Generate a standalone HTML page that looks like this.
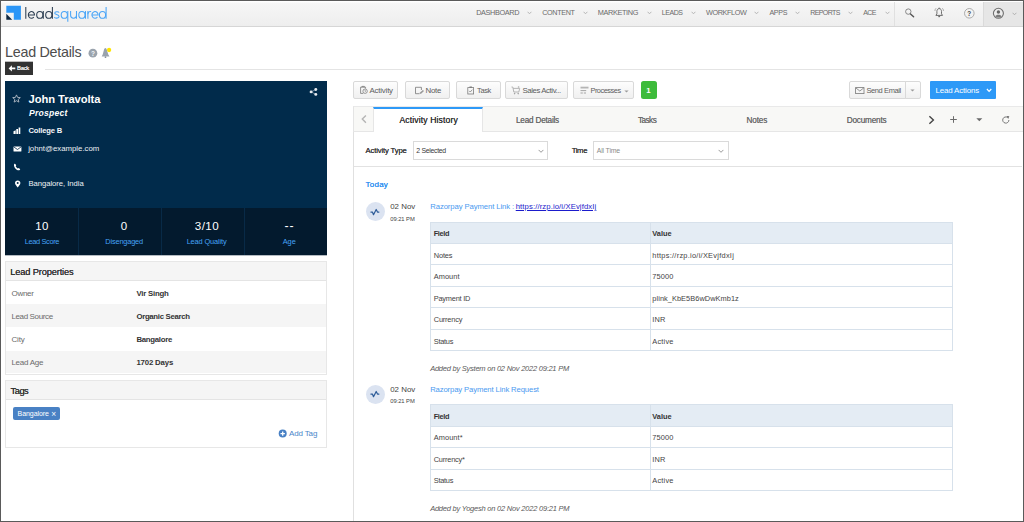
<!DOCTYPE html>
<html><head><meta charset="utf-8">
<style>
*{box-sizing:border-box;margin:0;padding:0}
html,body{width:1024px;height:522px;overflow:hidden;background:#fff}
body{font-family:"Liberation Sans",sans-serif;color:#333;position:relative}
.abs{position:absolute}
.t{position:absolute;white-space:pre;line-height:1}
#frame{position:absolute;left:0;top:0;width:1024px;height:522px;border:1px solid #5a5a5a;z-index:50;pointer-events:none}
#hdr{left:0;top:0;width:1024px;height:27px;background:linear-gradient(#fff 0,#fff 2px,#f6f6f6 3px,#eeeeee 26px);border-bottom:1px solid #d6d6d6}
.car{position:absolute}
.btn{position:absolute;top:81px;height:18.4px;border:1px solid #d9d9d9;border-radius:2px;background:linear-gradient(#fdfdfd,#f0f0f0)}
.row{position:absolute;left:6px;width:320px;height:23px}
.tbl{position:absolute;left:430px;width:523px;border:1px solid #d7e1eb;background:#fff}
.tbl .hd{position:absolute;left:0;right:0;top:0;height:20px;background:#e4ecf4}
.tbl .hl{position:absolute;left:0;right:0;height:1px;background:#d7e1eb}
.tbl .vd{position:absolute;left:218.5px;top:0;bottom:0;width:1px;background:#d7e1eb}
</style></head><body>
<div id="frame"></div>

<!-- header -->
<div id="hdr" class="abs"></div>
<svg class="abs" style="left:6px;top:5px" width="16" height="16" viewBox="0 0 16 16"><path d="M0.3 0.8 H14.9 V14.7 H7.8 V7.8 H0.3Z" fill="#2b96f7"/><path d="M0.3 8.8 L6.2 14.7 L0.3 14.7Z" fill="#0d2640"/></svg>
<svg class="abs" style="left:526.7px;top:11px" width="5" height="4" viewBox="0 0 5 4"><path d="M0.6 0.8 L2.5 2.8 L4.4 0.8" fill="none" stroke="#b0b0b0" stroke-width="0.9"/></svg><svg class="abs" style="left:582.7px;top:11px" width="5" height="4" viewBox="0 0 5 4"><path d="M0.6 0.8 L2.5 2.8 L4.4 0.8" fill="none" stroke="#b0b0b0" stroke-width="0.9"/></svg><svg class="abs" style="left:646.5px;top:11px" width="5" height="4" viewBox="0 0 5 4"><path d="M0.6 0.8 L2.5 2.8 L4.4 0.8" fill="none" stroke="#b0b0b0" stroke-width="0.9"/></svg><svg class="abs" style="left:690.7px;top:11px" width="5" height="4" viewBox="0 0 5 4"><path d="M0.6 0.8 L2.5 2.8 L4.4 0.8" fill="none" stroke="#b0b0b0" stroke-width="0.9"/></svg><svg class="abs" style="left:754.0px;top:11px" width="5" height="4" viewBox="0 0 5 4"><path d="M0.6 0.8 L2.5 2.8 L4.4 0.8" fill="none" stroke="#b0b0b0" stroke-width="0.9"/></svg><svg class="abs" style="left:794.5px;top:11px" width="5" height="4" viewBox="0 0 5 4"><path d="M0.6 0.8 L2.5 2.8 L4.4 0.8" fill="none" stroke="#b0b0b0" stroke-width="0.9"/></svg><svg class="abs" style="left:848.0px;top:11px" width="5" height="4" viewBox="0 0 5 4"><path d="M0.6 0.8 L2.5 2.8 L4.4 0.8" fill="none" stroke="#b0b0b0" stroke-width="0.9"/></svg><svg class="abs" style="left:884.5px;top:11px" width="5" height="4" viewBox="0 0 5 4"><path d="M0.6 0.8 L2.5 2.8 L4.4 0.8" fill="none" stroke="#b0b0b0" stroke-width="0.9"/></svg>
<!--LOGO--><svg class="abs" style="left:0;top:0" width="112" height="26" viewBox="0 0 112 26" fill="none" stroke-width="1.05"><g stroke="#2c3e52"><path d="M25.8 7.0 V18.75"/><path d="M28.299999999999997 15.0 H34.5 A3.1 3.35 0 1 0 33.84 16.96"/><ellipse cx="39.8" cy="14.9" rx="3.1" ry="3.35"/><path d="M43.3 11.05 V18.75"/><ellipse cx="48.8" cy="14.9" rx="3.1" ry="3.35"/><path d="M52.4 7.0 V18.75"/></g><g stroke="#4aa5f7"><path d="M59.099999999999994 12.55 C58.49999999999999 11.350000000000001 54.7 11.25 54.7 13.25 C54.7 14.700000000000001 59.099999999999994 14.5 59.099999999999994 16.45 C59.099999999999994 18.55 54.8 18.55 54.3 17.15"/><ellipse cx="64.3" cy="14.9" rx="3.1" ry="3.35"/><path d="M67.8 11.05 V21.8"/><path d="M70.6 11.05 V15.3 A2.95 2.95 0 0 0 76.5 15.3 V11.05"/><path d="M76.5 14.9 V18.75"/><ellipse cx="81.9" cy="14.9" rx="3.1" ry="3.35"/><path d="M85.5 11.05 V18.75"/><path d="M87.9 11.05 V18.75"/><path d="M87.9 14.3 C87.9 11.75 89.6 11.350000000000001 91.2 11.65"/><path d="M91.9 15.0 H98.1 A3.1 3.35 0 1 0 97.44 16.96"/><ellipse cx="102.5" cy="14.9" rx="3.1" ry="3.35"/><path d="M106.1 7.0 V18.75"/></g></svg><!--/LOGO-->
<div class="abs" style="left:894px;top:2px;width:1px;height:24px;background:#e0e0e0"></div>
<div class="abs" style="left:983px;top:2px;width:41px;height:24px;background:#e6e6e6;border-left:1px solid #dadada"></div>
<!-- search -->
<svg class="abs" style="left:904px;top:7px" width="12" height="12" viewBox="0 0 12 12"><circle cx="4.3" cy="4.6" r="2.7" fill="none" stroke="#7a7a7a" stroke-width="0.9"/><path d="M6.5 6.9 L9.6 9.8" stroke="#555" stroke-width="1.4" stroke-linecap="round"/></svg>
<!-- bell -->
<svg class="abs" style="left:933px;top:6px" width="13" height="14" viewBox="0 0 13 14"><path d="M6.2 2.6 C4.5 2.6 3.9 4 3.9 5.6 L3.9 7.8 L2.9 9.4 L9.5 9.4 L8.5 7.8 L8.5 5.6 C8.5 4 7.9 2.6 6.2 2.6Z" fill="none" stroke="#666" stroke-width="0.95"/><path d="M5.3 10.6 h1.8" stroke="#666" stroke-width="1.1"/><path d="M6.2 1.6 v1" stroke="#666" stroke-width="0.9"/><path d="M3.2 2.2 C2.2 3 1.9 4 2 5 M9.2 2.2 C10.2 3 10.5 4 10.4 5" fill="none" stroke="#888" stroke-width="0.7"/></svg>
<!-- help -->
<svg class="abs" style="left:963px;top:7px" width="13" height="13" viewBox="0 0 13 13"><circle cx="6.3" cy="6.3" r="4.8" fill="none" stroke="#a4a4a4" stroke-width="0.9"/><text x="6.3" y="8.6" font-size="6.4" font-weight="bold" text-anchor="middle" fill="#444" font-family="Liberation Sans">?</text></svg>
<!-- user -->
<svg class="abs" style="left:991.5px;top:7px" width="13" height="13" viewBox="0 0 13 13"><circle cx="6.4" cy="6.3" r="5" fill="#ececec" stroke="#6e6e6e" stroke-width="1.1"/><circle cx="6.4" cy="5" r="1.7" fill="#666"/><path d="M3.2 9.3 C3.8 7.2 9 7.2 9.6 9.3 C8 11 4.8 11 3.2 9.3Z" fill="#7a7a7a"/></svg>
<svg class="abs" style="left:1011.5px;top:11.5px" width="5" height="4" viewBox="0 0 5 4"><path d="M0.6 0.8 L2.5 2.8 L4.4 0.8" fill="none" stroke="#aaa" stroke-width="0.9"/></svg>

<!-- title -->
<svg class="abs" style="left:88px;top:48px" width="10" height="11" viewBox="0 0 10 11"><circle cx="4.9" cy="5.15" r="4.4" fill="#9aa3ad"/><text x="4.9" y="7.6" font-size="6.5" font-weight="bold" text-anchor="middle" fill="#f4f5f6" font-family="Liberation Sans">?</text></svg>
<svg class="abs" style="left:100px;top:46px" width="13" height="13" viewBox="0 0 13 13"><path d="M5.4 2 C4.8 2 4.3 2.7 4 3.8 L2.7 8.6 L1.7 10.6 H9.5 L8.3 8.6 L6.8 3.8 C6.5 2.7 6 2 5.4 2Z" fill="#9aa3ad"/><circle cx="5.5" cy="11.2" r="0.85" fill="#8a929b"/><circle cx="9.1" cy="4" r="2.15" fill="#ffe500"/></svg>
<div class="abs" style="left:5px;top:61px;width:28px;height:1px;background:#bdbdbd"></div><div class="abs" style="left:5px;top:62px;width:28px;height:12.8px;background:#333"></div>
<svg class="abs" style="left:8px;top:65px" width="8" height="7" viewBox="0 0 8 7"><path d="M0.6 3.4 L3.9 0.3 L3.9 2.5 L7.3 2.5 L7.3 4.3 L3.9 4.3 L3.9 6.5Z" fill="#fff"/></svg>
<div class="abs" style="left:45px;top:69px;width:977px;height:1px;background:#e4e4e4"></div>

<!-- lead card -->
<div class="abs" style="left:5px;top:81px;width:321.5px;height:127px;background:#012b4b"></div>
<div class="abs" style="left:5px;top:208px;width:321.5px;height:47px;background:#031a2e"></div>
<div class="abs" style="left:5px;top:255px;width:321.5px;height:1px;background:#b4bbc2"></div>
<div class="abs" style="left:78.3px;top:208px;width:1px;height:47px;background:#082a47"></div>
<div class="abs" style="left:161px;top:208px;width:1px;height:47px;background:#082a47"></div>
<div class="abs" style="left:243.7px;top:208px;width:1px;height:47px;background:#082a47"></div>
<svg class="abs" style="left:12.3px;top:93.8px" width="9" height="9" viewBox="0 0 9 9"><path d="M4.5 0.9 L5.6 3.4 L8.3 3.6 L6.2 5.4 L6.9 8.1 L4.5 6.7 L2.1 8.1 L2.8 5.4 L0.7 3.6 L3.4 3.4Z" fill="none" stroke="#b3bcc6" stroke-width="0.9"/></svg>
<svg class="abs" style="left:309px;top:87px" width="10" height="10" viewBox="0 0 10 10"><path d="M2.1 4.9 L6.8 2.5 M2.1 4.9 L6.8 7.4" stroke="#9fb0c0" stroke-width="0.7"/><circle cx="2.1" cy="4.9" r="1.45" fill="#e8ebef"/><circle cx="6.8" cy="2.5" r="1.45" fill="#e8ebef"/><circle cx="6.8" cy="7.4" r="1.45" fill="#e8ebef"/></svg>
<svg class="abs" style="left:13px;top:127px" width="8" height="8" viewBox="0 0 8 8"><path d="M0.5 7 L0.5 4.3 L2.7 3.3 L2.7 7Z M3.3 7 L3.3 2 L5 2 L5 7Z M5.6 7 L5.6 0.4 L7.3 0.4 L7.3 7Z" fill="#fff"/></svg>
<svg class="abs" style="left:13px;top:145.5px" width="9" height="7" viewBox="0 0 9 7"><rect x="0.5" y="0.4" width="7.9" height="5.2" rx="0.6" fill="#fff"/><path d="M0.8 0.9 L4.45 3.5 L8.1 0.9" stroke="#00294a" stroke-width="0.8" fill="none"/></svg>
<svg class="abs" style="left:13px;top:162.5px" width="9" height="9" viewBox="0 0 9 9"><path d="M1.4 1.2 C2 0.6 2.6 0.8 3 1.6 L3.5 2.6 C3.7 3 3.4 3.4 3 3.7 C3.6 4.9 4.3 5.6 5.4 6.2 C5.8 5.7 6.2 5.5 6.6 5.8 L7.5 6.4 C8.2 6.9 8 7.5 7.4 7.9 C6.2 8.6 4 7.6 2.6 6 C1.2 4.4 0.6 2.2 1.4 1.2Z" fill="#fff" transform="scale(0.9)"/></svg>
<svg class="abs" style="left:14px;top:180px" width="8" height="9" viewBox="0 0 8 9"><path d="M3.7 0.4 C2.1 0.4 1 1.6 1 3 C1 4.6 2.8 6 3.7 7.6 C4.6 6 6.4 4.6 6.4 3 C6.4 1.6 5.3 0.4 3.7 0.4Z" fill="#fff"/><circle cx="3.7" cy="3" r="1" fill="#00294a"/></svg>

<!-- lead properties -->
<div class="abs" style="left:5px;top:261px;width:322px;height:113.5px;border:1px solid #e7e7e7;background:#fff"></div>
<div class="abs" style="left:6px;top:262px;width:320px;height:19px;background:#f5f5f5;border-bottom:1px solid #e4e4e4"></div>
<div class="row" style="top:304px;background:#f5f5f5"></div>
<div class="row" style="top:350.7px;height:22.8px;background:#f5f5f5"></div>

<!-- tags -->
<div class="abs" style="left:5px;top:380.3px;width:322px;height:68px;border:1px solid #e7e7e7;background:#fff"></div>
<div class="abs" style="left:6px;top:381.3px;width:320px;height:18.5px;background:#f5f5f5;border-bottom:1px solid #e4e4e4"></div>
<div class="abs" style="left:13px;top:407px;width:47px;height:13.4px;background:#4981c4;border-radius:2px"></div>
<svg class="abs" style="left:278px;top:428.5px" width="9" height="9" viewBox="0 0 9 9"><circle cx="4.7" cy="4.6" r="4" fill="#4880c4"/><path d="M4.7 2.4 V6.8 M2.5 4.6 H6.9" stroke="#fff" stroke-width="1.3"/></svg>

<!-- right pane -->
<div class="abs" style="left:353px;top:107px;width:1px;height:415px;background:#e0e0e0"></div>
<div class="btn" style="left:353px;width:45.3px"></div>
<div class="btn" style="left:405px;width:45px"></div>
<div class="btn" style="left:455.6px;width:45px"></div>
<div class="btn" style="left:505px;width:62.8px"></div>
<div class="btn" style="left:573px;width:60.8px"></div>
<svg class="abs" style="left:623.5px;top:89.5px" width="5" height="3" viewBox="0 0 5 3"><path d="M0.4 0.4 H4.6 L2.5 2.5Z" fill="#9a9a9a"/></svg>
<div class="abs" style="left:640.8px;top:81px;width:16px;height:18.4px;background:#3dbb3b;border-radius:2.5px"></div>
<!-- btn icons -->
<svg class="abs" style="left:359px;top:85px" width="11" height="11" viewBox="0 0 11 11"><path d="M3.6 2.2 H1.6 V8.4 H4.2 M6.6 3.6 V2.2 H3.6 M2.9 2.2 V1.4 H5.4 V2.2" fill="none" stroke="#777" stroke-width="0.8"/><circle cx="6.1" cy="6.2" r="2.2" fill="none" stroke="#777" stroke-width="0.75"/><path d="M6.1 5 V6.3 H7" fill="none" stroke="#777" stroke-width="0.6"/></svg>
<svg class="abs" style="left:414px;top:85px" width="12" height="11" viewBox="0 0 12 11"><path d="M5.6 8.7 H1.5 V2.3 H7.4 V5" fill="none" stroke="#777" stroke-width="0.8"/><path d="M5.8 8.9 L6.3 7.3 L8.9 4.9 L10 6 L7.4 8.4Z" fill="#999" stroke="none"/></svg>
<svg class="abs" style="left:466.5px;top:86px" width="8" height="9" viewBox="0 0 8 9"><rect x="0.8" y="1.6" width="5.8" height="6.4" fill="none" stroke="#7c7c7c" stroke-width="0.8"/><path d="M2.5 1.2 h2.4" stroke="#7c7c7c" stroke-width="1.4"/><path d="M2.2 4.9 L3.3 6 L5.3 3.7" fill="none" stroke="#7c7c7c" stroke-width="0.8"/></svg>
<svg class="abs" style="left:511px;top:86px" width="10" height="9" viewBox="0 0 10 9"><path d="M0.5 1 H1.8 L2.8 6 H7.8 L8.7 2.4 H2.2" fill="none" stroke="#a4a4a4" stroke-width="0.8"/><circle cx="3.6" cy="7.6" r="0.8" fill="#a4a4a4"/><circle cx="7.2" cy="7.6" r="0.8" fill="#a4a4a4"/><path d="M7.6 0.2 V1.8 M6.8 1 H8.4" stroke="#a4a4a4" stroke-width="0.6"/></svg>
<svg class="abs" style="left:579.5px;top:86px" width="9" height="9" viewBox="0 0 9 9"><path d="M0.5 1.6 H8.5" stroke="#b5b5b5" stroke-width="1.8"/><path d="M0.5 4.6 H6.2 M0.5 7 H2.8 M3.8 7 H6" stroke="#9a9a9a" stroke-width="0.9"/></svg>

<!-- send email / lead actions -->
<div class="btn" style="left:849px;width:57px;border-radius:2px 0 0 2px"></div>
<div class="btn" style="left:905px;width:15.5px;border-radius:0 2px 2px 0"></div>
<svg class="abs" style="left:910.3px;top:88.5px" width="5" height="3" viewBox="0 0 5 3"><path d="M0.4 0.4 H4.6 L2.5 2.5Z" fill="#9a9a9a"/></svg>
<svg class="abs" style="left:854.5px;top:86.5px" width="10" height="8" viewBox="0 0 10 8"><rect x="0.6" y="0.6" width="8.4" height="6" fill="none" stroke="#7a7a7a" stroke-width="0.8"/><path d="M0.8 0.9 L4.8 4 L8.8 0.9" fill="none" stroke="#7a7a7a" stroke-width="0.8"/></svg>
<div class="abs" style="left:930px;top:81px;width:65.6px;height:18.4px;background:#2d99f7;border-radius:1px"></div>
<svg class="abs" style="left:986px;top:88px" width="6" height="5" viewBox="0 0 6 5"><path d="M0.9 1 L3.1 3.3 L5.3 1" fill="none" stroke="#fff" stroke-width="1.2"/></svg>

<!-- tabs -->
<div class="abs" style="left:353px;top:106px;width:671px;height:26px;background:#f8f8f6;border-top:1px solid #e9e9e9;border-bottom:1px solid #e6e6e6;border-left:1px solid #e4e4e4"></div>
<div class="abs" style="left:373px;top:107px;width:110.3px;height:25px;background:#fff;border-top:2px solid #2d99f7;border-left:1px solid #e6e6e6;border-right:1px solid #e6e6e6"></div>
<svg class="abs" style="left:360px;top:114.2px" width="8" height="10" viewBox="0 0 8 10"><path d="M5.9 1.5 L2.3 5.1 L5.9 8.7" fill="none" stroke="#b4b4b4" stroke-width="1.4"/></svg>
<svg class="abs" style="left:927px;top:114.5px" width="9" height="10" viewBox="0 0 9 10"><path d="M2.4 1.2 L6.4 5 L2.4 8.8" fill="none" stroke="#444" stroke-width="1.4"/></svg>
<svg class="abs" style="left:948.5px;top:115px" width="9" height="9" viewBox="0 0 9 9"><path d="M4.5 1.2 V7.8 M1.2 4.5 H7.8" stroke="#6a6a6a" stroke-width="1"/></svg>
<svg class="abs" style="left:976px;top:117.8px" width="7" height="4" viewBox="0 0 7 4"><path d="M0.3 0.3 H6.3 L3.3 3.3Z" fill="#6a6a6a"/></svg>
<svg class="abs" style="left:1001px;top:114.5px" width="10" height="10" viewBox="0 0 10 10"><path d="M7.9 5 A3.1 3.1 0 1 1 6.6 2.5" fill="none" stroke="#6a6a6a" stroke-width="0.9"/><path d="M5.6 1 L8.3 1.3 L7.2 3.9Z" fill="#6a6a6a"/></svg>

<!-- filters -->
<div class="abs" style="left:413px;top:141px;width:135px;height:18.6px;border:1px solid #dadada;background:#fff"></div>
<svg class="abs" style="left:537.8px;top:148.5px" width="6" height="5" viewBox="0 0 6 5"><path d="M0.6 0.9 L3 3.3 L5.4 0.9" fill="none" stroke="#999" stroke-width="1"/></svg>
<div class="abs" style="left:593.3px;top:141px;width:135.4px;height:18.6px;border:1px solid #dadada;background:#fff"></div>
<svg class="abs" style="left:718.3px;top:148.5px" width="6" height="5" viewBox="0 0 6 5"><path d="M0.6 0.9 L3 3.3 L5.4 0.9" fill="none" stroke="#999" stroke-width="1"/></svg>
<div class="abs" style="left:354px;top:166px;width:668px;height:1px;background:#e2e2e2"></div>

<!-- activity 1 -->
<div class="abs" style="left:365.6px;top:202px;width:19.2px;height:19.2px;border-radius:50%;background:#dbe3f1"></div>
<svg class="abs" style="left:370px;top:207.6px" width="11" height="9" viewBox="0 0 11 9"><path d="M0.9 4.1 H2.4 L3.5 6.7 L6.2 1.5 L7.5 4.1 H8.9" fill="none" stroke="#2c5b98" stroke-width="1.2" stroke-linejoin="round" stroke-linecap="round"/></svg>
<div class="tbl" style="top:222px;height:129px"><div class="hd"></div><div class="vd"></div>
<div class="hl" style="top:20px"></div><div class="hl" style="top:41px"></div><div class="hl" style="top:63px"></div><div class="hl" style="top:84px"></div><div class="hl" style="top:106px"></div>
</div>

<!-- activity 2 -->
<div class="abs" style="left:365.6px;top:384.6px;width:19.2px;height:19.2px;border-radius:50%;background:#dbe3f1"></div>
<svg class="abs" style="left:370px;top:390.3px" width="11" height="9" viewBox="0 0 11 9"><path d="M0.9 4.1 H2.4 L3.5 6.7 L6.2 1.5 L7.5 4.1 H8.9" fill="none" stroke="#2c5b98" stroke-width="1.2" stroke-linejoin="round" stroke-linecap="round"/></svg>
<div class="tbl" style="top:404px;height:87px"><div class="hd" style="height:21px"></div><div class="vd"></div>
<div class="hl" style="top:21px"></div><div class="hl" style="top:42px"></div><div class="hl" style="top:64px"></div>
</div>

<div class="t" style="left:476.24px;top:9px;font-size:7.3px;color:#6a6a6a;letter-spacing:-0.381px;">DASHBOARD</div>
<div class="t" style="left:542.25px;top:9px;font-size:7.2px;color:#6a6a6a;letter-spacing:-0.353px;">CONTENT</div>
<div class="t" style="left:597.74px;top:9px;font-size:7.35px;color:#6a6a6a;letter-spacing:-0.375px;">MARKETING</div>
<div class="t" style="left:661.75px;top:9px;font-size:7.0px;color:#6a6a6a;letter-spacing:-0.440px;">LEADS</div>
<div class="t" style="left:705.95px;top:9px;font-size:7.25px;color:#6a6a6a;letter-spacing:-0.372px;">WORKFLOW</div>
<div class="t" style="left:769.45px;top:10px;font-size:7.15px;color:#6a6a6a;letter-spacing:-0.366px;">APPS</div>
<div class="t" style="left:810.15px;top:9px;font-size:7.0px;color:#6a6a6a;letter-spacing:-0.558px;">REPORTS</div>
<div class="t" style="left:863.15px;top:9px;font-size:7.0px;color:#6a6a6a;letter-spacing:-0.521px;">ACE</div>
<div class="t" style="left:5.10px;top:45px;font-size:14.3px;color:#4d4d4d;letter-spacing:-0.268px;">Lead Details</div>
<div class="t" style="left:17.09px;top:66px;font-size:5.9px;color:#f3f3f3;letter-spacing:-0.287px;text-shadow:0 0 0.4px #fff">Back</div>
<div class="t" style="left:28.61px;top:94px;font-size:11.2px;color:#fff;letter-spacing:-0.077px;font-weight:bold">John Travolta</div>
<div class="t" style="left:29.10px;top:109px;font-size:8.6px;color:#fff;letter-spacing:0.216px;font-weight:bold;font-style:italic">Prospect</div>
<div class="t" style="left:28.53px;top:127px;font-size:7.6px;color:#f4f6f8;letter-spacing:-0.165px;font-weight:bold">College B</div>
<div class="t" style="left:28.13px;top:145px;font-size:7.8px;color:#eef1f4;letter-spacing:-0.003px;">johnt@example.com</div>
<div class="t" style="left:28.53px;top:180px;font-size:7.7px;color:#eef1f4;letter-spacing:-0.056px;">Bangalore, India</div>
<div class="t" style="left:35.30px;top:221px;font-size:11.45px;color:#fff;letter-spacing:0.383px;">10</div>
<div class="t" style="left:120.80px;top:221px;font-size:11.5px;color:#fff;letter-spacing:0.406px;">0</div>
<div class="t" style="left:194.79px;top:220px;font-size:11.65px;color:#fff;letter-spacing:0.416px;">3/10</div>
<div class="t" style="left:284.47px;top:220px;font-size:12.3px;color:#fff;letter-spacing:1.045px;">--</div>
<div class="t" style="left:24.64px;top:238px;font-size:7.4px;color:#45a3f7;letter-spacing:-0.336px;">Lead Score</div>
<div class="t" style="left:105.34px;top:238px;font-size:7.4px;color:#45a3f7;letter-spacing:-0.183px;">Disengaged</div>
<div class="t" style="left:186.64px;top:238px;font-size:7.4px;color:#45a3f7;letter-spacing:-0.129px;">Lead Quality</div>
<div class="t" style="left:282.64px;top:238px;font-size:7.4px;color:#45a3f7;letter-spacing:-0.015px;">Age</div>
<div class="t" style="left:10.37px;top:268px;font-size:9.3px;color:#333;letter-spacing:-0.172px;text-shadow:0 0 0.35px #333">Lead Properties</div>
<div class="t" style="left:11.42px;top:290px;font-size:8.0px;color:#6b6b6b;letter-spacing:-0.245px;">Owner</div>
<div class="t" style="left:11.42px;top:313px;font-size:8.0px;color:#6b6b6b;letter-spacing:-0.363px;">Lead Source</div>
<div class="t" style="left:11.42px;top:336px;font-size:8.0px;color:#6b6b6b;letter-spacing:-0.149px;">City</div>
<div class="t" style="left:11.42px;top:359px;font-size:8.0px;color:#6b6b6b;letter-spacing:-0.260px;">Lead Age</div>
<div class="t" style="left:136.43px;top:290px;font-size:7.8px;color:#333;letter-spacing:-0.217px;font-weight:bold">Vir Singh</div>
<div class="t" style="left:136.43px;top:313px;font-size:7.8px;color:#333;letter-spacing:-0.318px;font-weight:bold">Organic Search</div>
<div class="t" style="left:136.43px;top:336px;font-size:7.8px;color:#333;letter-spacing:-0.282px;font-weight:bold">Bangalore</div>
<div class="t" style="left:136.43px;top:359px;font-size:7.8px;color:#333;letter-spacing:-0.166px;font-weight:bold">1702 Days</div>
<div class="t" style="left:10.47px;top:387px;font-size:9.3px;color:#333;letter-spacing:-0.454px;text-shadow:0 0 0.35px #333">Tags</div>
<div class="t" style="left:17.55px;top:410px;font-size:7px;color:#fff;letter-spacing:-0.063px;">Bangalore</div>
<div class="t" style="left:51.31px;top:410px;font-size:8.4px;color:#fff;letter-spacing:0.283px;">×</div>
<div class="t" style="left:289.12px;top:430px;font-size:8px;color:#4a86c9;letter-spacing:-0.163px;">Add Tag</div>
<div class="t" style="left:369.52px;top:87px;font-size:7.9px;color:#5c5c5c;letter-spacing:-0.206px;">Activity</div>
<div class="t" style="left:425.52px;top:87px;font-size:7.9px;color:#5c5c5c;letter-spacing:-0.263px;">Note</div>
<div class="t" style="left:477.04px;top:87px;font-size:7.45px;color:#5c5c5c;letter-spacing:-0.368px;">Task</div>
<div class="t" style="left:522.43px;top:87px;font-size:7.8px;color:#5c5c5c;letter-spacing:-0.399px;">Sales Activ...</div>
<div class="t" style="left:590.44px;top:87px;font-size:7.35px;color:#5c5c5c;letter-spacing:-0.455px;">Processes</div>
<div class="t" style="left:866.54px;top:87px;font-size:7.45px;color:#5c5c5c;letter-spacing:-0.383px;">Send Email</div>
<div class="t" style="left:646.33px;top:87px;font-size:7.8px;color:#fff;letter-spacing:0.202px;font-weight:bold">1</div>
<div class="t" style="left:935.42px;top:87px;font-size:7.9px;color:#fff;letter-spacing:-0.133px;">Lead Actions</div>
<div class="t" style="left:399.40px;top:116px;font-size:8.6px;color:#333;letter-spacing:0.133px;text-shadow:0 0 0.35px #333">Activity History</div>
<div class="t" style="left:516.01px;top:117px;font-size:8.2px;color:#6a6a6a;letter-spacing:-0.212px;text-shadow:0 0 0.25px #777">Lead Details</div>
<div class="t" style="left:637.91px;top:117px;font-size:8.2px;color:#6a6a6a;letter-spacing:-0.525px;text-shadow:0 0 0.25px #777">Tasks</div>
<div class="t" style="left:746.51px;top:117px;font-size:8.2px;color:#6a6a6a;letter-spacing:-0.137px;text-shadow:0 0 0.25px #777">Notes</div>
<div class="t" style="left:846.71px;top:117px;font-size:8.2px;color:#6a6a6a;letter-spacing:-0.194px;text-shadow:0 0 0.25px #777">Documents</div>
<div class="t" style="left:365.53px;top:147px;font-size:7.7px;color:#383838;letter-spacing:-0.142px;text-shadow:0 0 0.2px #383838">Activity Type</div>
<div class="t" style="left:416.26px;top:148px;font-size:6.9px;color:#3a3a3a;letter-spacing:-0.293px;">2 Selected</div>
<div class="t" style="left:571.73px;top:147px;font-size:7.7px;color:#383838;letter-spacing:-0.364px;text-shadow:0 0 0.2px #383838">Time</div>
<div class="t" style="left:596.76px;top:148px;font-size:6.9px;color:#8a8a8a;letter-spacing:-0.151px;">All Time</div>
<div class="t" style="left:365.52px;top:181px;font-size:8px;color:#2f8ff0;letter-spacing:0.245px;text-shadow:0 0 0.35px #2f8ff0">Today</div>
<div class="t" style="left:390.22px;top:203px;font-size:7.9px;color:#444;letter-spacing:0.007px;">02 Nov</div>
<div class="t" style="left:390.30px;top:217px;font-size:5.8px;color:#444;letter-spacing:-0.054px;">09:21 PM</div>
<div class="t" style="left:430.23px;top:203px;font-size:7.7px;color:#4a9af0;letter-spacing:-0.085px;">Razorpay Payment Link : </div>
<div class="t" style="left:515.73px;top:203px;font-size:7.7px;color:#1b1bcc;letter-spacing:0.109px;text-decoration:underline">https://rzp.io/i/XEvjfdxIj</div>
<div class="t" style="left:433.74px;top:230px;font-size:7.35px;color:#333;letter-spacing:-0.360px;font-weight:bold">Field</div>
<div class="t" style="left:652.34px;top:230px;font-size:7.4px;color:#333;letter-spacing:0.023px;font-weight:bold">Value</div>
<div class="t" style="left:433.74px;top:252px;font-size:7.4px;color:#444;letter-spacing:-0.121px;">Notes</div>
<div class="t" style="left:652.34px;top:252px;font-size:7.4px;color:#444;letter-spacing:0.269px;">https://rzp.io/i/XEvjfdxIj</div>
<div class="t" style="left:433.74px;top:273px;font-size:7.4px;color:#444;letter-spacing:0.052px;">Amount</div>
<div class="t" style="left:652.34px;top:273px;font-size:7.4px;color:#444;letter-spacing:0.135px;">75000</div>
<div class="t" style="left:433.74px;top:295px;font-size:7.4px;color:#444;letter-spacing:-0.211px;">Payment ID</div>
<div class="t" style="left:652.34px;top:295px;font-size:7.4px;color:#444;letter-spacing:0.055px;">plink_KbE5B6wDwKmb1z</div>
<div class="t" style="left:433.74px;top:316px;font-size:7.4px;color:#444;letter-spacing:-0.196px;">Currency</div>
<div class="t" style="left:652.34px;top:316px;font-size:7.4px;color:#444;letter-spacing:0.193px;">INR</div>
<div class="t" style="left:433.74px;top:338px;font-size:7.4px;color:#444;letter-spacing:-0.261px;">Status</div>
<div class="t" style="left:652.34px;top:338px;font-size:7.4px;color:#444;letter-spacing:0.196px;">Active</div>
<div class="t" style="left:430.14px;top:365px;font-size:7.5px;color:#5a5a5a;letter-spacing:-0.236px;font-style:italic">Added by System on 02 Nov 2022 09:21 PM</div>
<div class="t" style="left:390.22px;top:386px;font-size:7.9px;color:#444;letter-spacing:0.007px;">02 Nov</div>
<div class="t" style="left:390.30px;top:399px;font-size:5.8px;color:#444;letter-spacing:-0.054px;">09:21 PM</div>
<div class="t" style="left:430.13px;top:386px;font-size:7.7px;color:#4a9af0;letter-spacing:-0.125px;">Razorpay Payment Link Request</div>
<div class="t" style="left:433.74px;top:413px;font-size:7.35px;color:#333;letter-spacing:-0.360px;font-weight:bold">Field</div>
<div class="t" style="left:652.34px;top:413px;font-size:7.4px;color:#333;letter-spacing:0.023px;font-weight:bold">Value</div>
<div class="t" style="left:433.74px;top:434px;font-size:7.4px;color:#444;letter-spacing:0.071px;">Amount*</div>
<div class="t" style="left:652.34px;top:434px;font-size:7.4px;color:#444;letter-spacing:0.135px;">75000</div>
<div class="t" style="left:433.74px;top:456px;font-size:7.4px;color:#444;letter-spacing:-0.205px;">Currency*</div>
<div class="t" style="left:652.34px;top:456px;font-size:7.4px;color:#444;letter-spacing:0.193px;">INR</div>
<div class="t" style="left:433.74px;top:477px;font-size:7.4px;color:#444;letter-spacing:-0.261px;">Status</div>
<div class="t" style="left:652.34px;top:477px;font-size:7.4px;color:#444;letter-spacing:0.196px;">Active</div>
<div class="t" style="left:430.14px;top:505px;font-size:7.5px;color:#5a5a5a;letter-spacing:-0.222px;font-style:italic">Added by Yogesh on 02 Nov 2022 09:21 PM</div>
</body></html>
